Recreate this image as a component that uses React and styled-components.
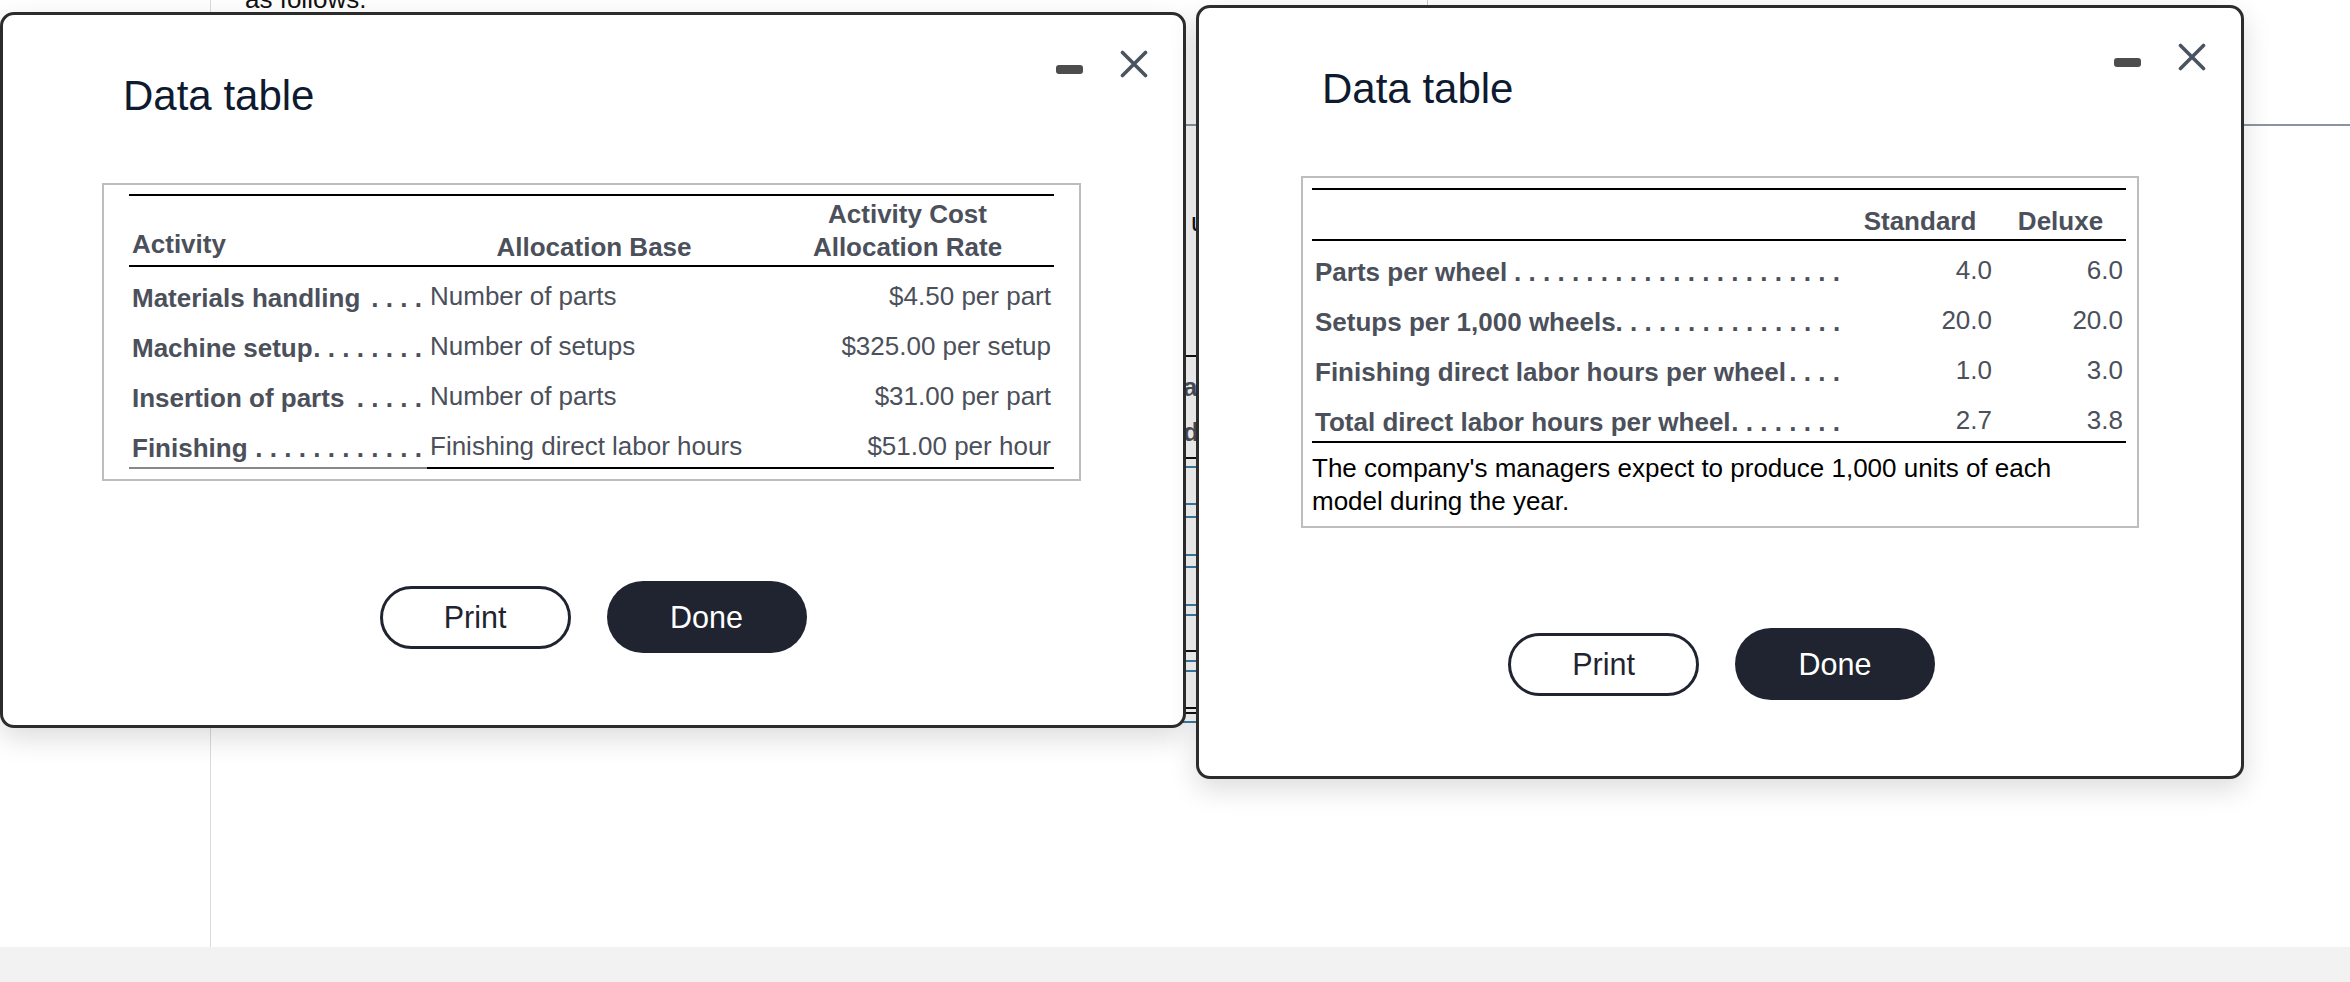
import React from "react";
import styled, { createGlobalStyle } from "styled-components";

const GlobalStyle = createGlobalStyle`
  html, body {
    margin: 0;
    padding: 0;
    background: #fff;
  }
  body {
    font-family: "Liberation Sans", Arial, Helvetica, sans-serif;
    overflow: hidden;
  }
  * {
    box-sizing: border-box;
  }
`;

const ink = "#4b505b";

const activityRows = [
  { label: "Materials handling", dots: 4, base: "Number of parts", rate: "$4.50 per part" },
  { label: "Machine setup", dots: 8, base: "Number of setups", rate: "$325.00 per setup" },
  { label: "Insertion of parts", dots: 5, base: "Number of parts", rate: "$31.00 per part" },
  { label: "Finishing", dots: 12, base: "Finishing direct labor hours", rate: "$51.00 per hour" },
];

const wheelRows = [
  { label: "Parts per wheel", dots: 23, standard: "4.0", deluxe: "6.0" },
  { label: "Setups per 1,000 wheels", dots: 16, standard: "20.0", deluxe: "20.0" },
  { label: "Finishing direct labor hours per wheel", dots: 4, standard: "1.0", deluxe: "3.0" },
  { label: "Total direct labor hours per wheel", dots: 8, standard: "2.7", deluxe: "3.8" },
];

// lines of the worksheet that peeks out between the two dialogs
const sheetLines = [
  { text: "u", gap: 80, pad: 12 },
  { tone: "ink", gap: 116 },
  { text: "a", gap: 14, pad: 4, bold: true },
  { text: "d", gap: 12, pad: 4, bold: true },
  { tone: "ink", gap: 8 },
  { tone: "blue", gap: 7 },
  { tone: "blue", gap: 35 },
  { tone: "blue", gap: 11 },
  { tone: "blue", gap: 36 },
  { tone: "blue", gap: 10 },
  { tone: "blue", gap: 36 },
  { tone: "blue", gap: 8 },
  { tone: "ink", gap: 34 },
  { tone: "blue", gap: 8 },
  { tone: "blue", gap: 8 },
  { tone: "ink", gap: 35 },
  { tone: "ink", gap: 3 },
  { tone: "blue", gap: 7 },
];

export default function App() {
  return (
    <>
      <GlobalStyle />
      <Page>
        <Gutter />
        <Main>
          <Intro>
            <IntroText>as follows.</IntroText>
            <IntroAside />
          </Intro>
          <Sheet>
            {sheetLines.map((line, i) =>
              line.text ? (
                <SheetText key={i} $gap={line.gap} $pad={line.pad} $bold={line.bold}>
                  {line.text}
                </SheetText>
              ) : (
                <SheetRule key={i} $gap={line.gap} $tone={line.tone} />
              )
            )}
          </Sheet>
        </Main>
        <Footer />

        <Window $x={0} $y={12} $w={1186} $h={716}>
          <TitleBar $shift={0}>
            <Title>Data table</Title>
            <WindowControls />
          </TitleBar>
          <Body $shift={0}>
            <TableBox $pad="9px 25px 10px 25px">
              <Table>
                <colgroup>
                  <col style={{ width: 298 }} />
                  <col style={{ width: 334 }} />
                  <col style={{ width: 293 }} />
                </colgroup>
                <thead>
                  <tr>
                    <HeadCell $align="left" $pad="2px 3px 4px">Activity</HeadCell>
                    <HeadCell $align="center" $pad="2px 3px 1px">Allocation Base</HeadCell>
                    <HeadCell $align="center" $pad="2px 3px 1px">
                      Activity Cost
                      <br />
                      Allocation Rate
                    </HeadCell>
                  </tr>
                </thead>
                <tbody>
                  {activityRows.map((row, i) => {
                    const last = i === activityRows.length - 1;
                    return (
                      <tr key={row.label}>
                        <Cell $bold $rule={last ? "gray" : null}>
                          <Leader>
                            <span>{row.label}</span>
                            <Dots>{".".repeat(row.dots)}</Dots>
                          </Leader>
                        </Cell>
                        <Cell $rule={last ? "black" : null}>{row.base}</Cell>
                        <Cell $align="right" $rule={last ? "black" : null}>
                          {row.rate}
                        </Cell>
                      </tr>
                    );
                  })}
                </tbody>
              </Table>
            </TableBox>
            <Actions>
              <PrintButton>Print</PrintButton>
              <DoneButton>Done</DoneButton>
            </Actions>
          </Body>
        </Window>

        <Window $x={1196} $y={5} $w={1048} $h={774}>
          <TitleBar $shift={3}>
            <Title>Data table</Title>
            <WindowControls />
          </TitleBar>
          <Body $shift={3}>
            <TableBox $pad="10px 11px 8px 9px">
              <Table>
                <colgroup>
                  <col style={{ width: 533 }} />
                  <col style={{ width: 150 }} />
                  <col style={{ width: 131 }} />
                </colgroup>
                <thead>
                  <tr>
                    <HeadCell $align="left" $pad="15px 3px 1px" />
                    <HeadCell $align="center" $pad="15px 3px 1px">Standard</HeadCell>
                    <HeadCell $align="center" $pad="15px 3px 1px">Deluxe</HeadCell>
                  </tr>
                </thead>
                <tbody>
                  {wheelRows.map((row, i) => {
                    const last = i === wheelRows.length - 1;
                    return (
                      <tr key={row.label}>
                        <Cell $bold $rule={last ? "black" : null}>
                          <Leader>
                            <span>{row.label}</span>
                            <Dots>{".".repeat(row.dots)}</Dots>
                          </Leader>
                        </Cell>
                        <Cell $align="right" $rule={last ? "black" : null}>
                          {row.standard}
                        </Cell>
                        <Cell $align="right" $rule={last ? "black" : null}>
                          {row.deluxe}
                        </Cell>
                      </tr>
                    );
                  })}
                  <tr>
                    <NoteCell colSpan={3}>
                      <Note>
                        The company's managers expect to produce 1,000 units of each model
                        during the year.
                      </Note>
                    </NoteCell>
                  </tr>
                </tbody>
              </Table>
            </TableBox>
            <Actions>
              <PrintButton>Print</PrintButton>
              <DoneButton>Done</DoneButton>
            </Actions>
          </Body>
        </Window>
      </Page>
    </>
  );
}

function WindowControls() {
  return (
    <Controls>
      <MinimizeButton aria-label="Minimize" />
      <CloseButton aria-label="Close">
        <svg width="28" height="28" viewBox="0 0 28 28" fill="none">
          <path
            d="M2.5 2.5L25.5 25.5M25.5 2.5L2.5 25.5"
            stroke="currentColor"
            strokeWidth="3.6"
            strokeLinecap="round"
          />
        </svg>
      </CloseButton>
    </Controls>
  );
}

const Page = styled.div`
  position: relative;
  width: 2350px;
  height: 982px;
  overflow: hidden;
  display: grid;
  grid-template-columns: 211px 1fr;
  grid-template-rows: 947px 35px;
`;

const Gutter = styled.div`
  border-right: 1px solid #dadae3;
`;

const Main = styled.div`
  overflow: hidden;
`;

const Footer = styled.div`
  grid-column: 1 / -1;
  background: #f2f2f2;
`;

const Intro = styled.div`
  display: flex;
  height: 126px;
  border-bottom: 2px solid #8b94a2;
`;

const IntroText = styled.div`
  width: 1216px;
  margin-top: -17px;
  padding-left: 34px;
  font-size: 26px;
  line-height: 33px;
  color: #111;
`;

const IntroAside = styled.div`
  flex: 1;
  border-left: 1px solid #c9c9d2;
`;

const Sheet = styled.div`
  display: flex;
  flex-direction: column;
  width: 130px;
  margin-left: 968px;
`;

const SheetText = styled.div`
  margin-top: ${(p) => p.$gap}px;
  padding-left: ${(p) => p.$pad}px;
  font-size: 26px;
  line-height: 33px;
  font-weight: ${(p) => (p.$bold ? 700 : 400)};
  color: ${(p) => (p.$bold ? ink : "#111")};
`;

const SheetRule = styled.div`
  margin-top: ${(p) => p.$gap}px;
  height: 2px;
  background: ${(p) => (p.$tone === "blue" ? "#3d7ea6" : "#111")};
`;

const Window = styled.section`
  position: absolute;
  left: ${(p) => p.$x}px;
  top: ${(p) => p.$y}px;
  width: ${(p) => p.$w}px;
  height: ${(p) => p.$h}px;
  display: flex;
  flex-direction: column;
  background: #fff;
  border: 3px solid #2c2c2c;
  border-radius: 14px;
  box-shadow: 0 10px 28px rgba(0, 0, 0, 0.14);
  font-family: "Liberation Sans", Arial, Helvetica, sans-serif;
`;

const TitleBar = styled.header`
  display: flex;
  justify-content: space-between;
  align-items: flex-start;
  padding: 35px 35px 0 ${(p) => 120 + p.$shift}px;
`;

const Title = styled.h2`
  margin: 22px 0 0;
  font-size: 42px;
  font-weight: 400;
  line-height: 48px;
  color: #0e1a2f;
`;

const Controls = styled.div`
  display: flex;
  align-items: flex-start;
  gap: 37px;
`;

const MinimizeButton = styled.button`
  width: 27px;
  height: 9px;
  margin-top: 15px;
  padding: 0;
  border: none;
  border-radius: 3px;
  background: #4d4d4d;
`;

const CloseButton = styled.button`
  display: flex;
  width: 28px;
  height: 28px;
  padding: 0;
  border: none;
  background: none;
  color: #4a5461;
`;

const Body = styled.div`
  display: flex;
  flex-direction: column;
  padding: 63px 102px 0 ${(p) => 99 + p.$shift}px;
`;

const TableBox = styled.div`
  border: 2px solid #bdbdbd;
  padding: ${(p) => p.$pad};
`;

const Table = styled.table`
  width: 100%;
  table-layout: fixed;
  border-collapse: separate;
  border-spacing: 0;
  font-size: 26px;
  line-height: 33px;
  color: ${ink};
`;

const HeadCell = styled.th`
  padding: ${(p) => p.$pad};
  text-align: ${(p) => p.$align};
  vertical-align: bottom;
  font-weight: 700;
  border-top: 2px solid #000;
  border-bottom: 2px solid #000;
`;

const Cell = styled.td`
  padding: ${(p) => (p.$bold ? "15px 3px 2px" : "13px 3px 4px")};
  text-align: ${(p) => p.$align || "left"};
  vertical-align: top;
  font-weight: ${(p) => (p.$bold ? 700 : 400)};
  white-space: nowrap;
  border-bottom: ${(p) =>
    p.$rule ? `2px solid ${p.$rule === "gray" ? "#888" : "#000"}` : "none"};
`;

const Leader = styled.div`
  display: flex;
  justify-content: space-between;
`;

const Dots = styled.span`
  font-weight: 700;
  letter-spacing: 7.27px;
  margin-right: -7.27px;
  padding-right: 2px;
`;

const NoteCell = styled.td`
  padding: 9px 0 0;
`;

const Note = styled.p`
  max-width: 780px;
  margin: 0;
  font-size: 26px;
  line-height: 33px;
  color: #000;
`;

const Actions = styled.div`
  display: flex;
  justify-content: center;
  align-items: center;
  gap: 36px;
  margin-top: 100px;
  margin-left: 3px;
`;

const PrintButton = styled.button`
  width: 191px;
  height: 63px;
  padding: 0;
  border: 3px solid #1f2430;
  border-radius: 999px;
  background: #fff;
  color: #1f2430;
  font-family: "Liberation Sans", Arial, Helvetica, sans-serif;
  font-size: 30.5px;
`;

const DoneButton = styled.button`
  width: 200px;
  height: 72px;
  padding: 0;
  border: none;
  border-radius: 999px;
  background: #1f2430;
  color: #fff;
  font-family: "Liberation Sans", Arial, Helvetica, sans-serif;
  font-size: 30.5px;
`;
